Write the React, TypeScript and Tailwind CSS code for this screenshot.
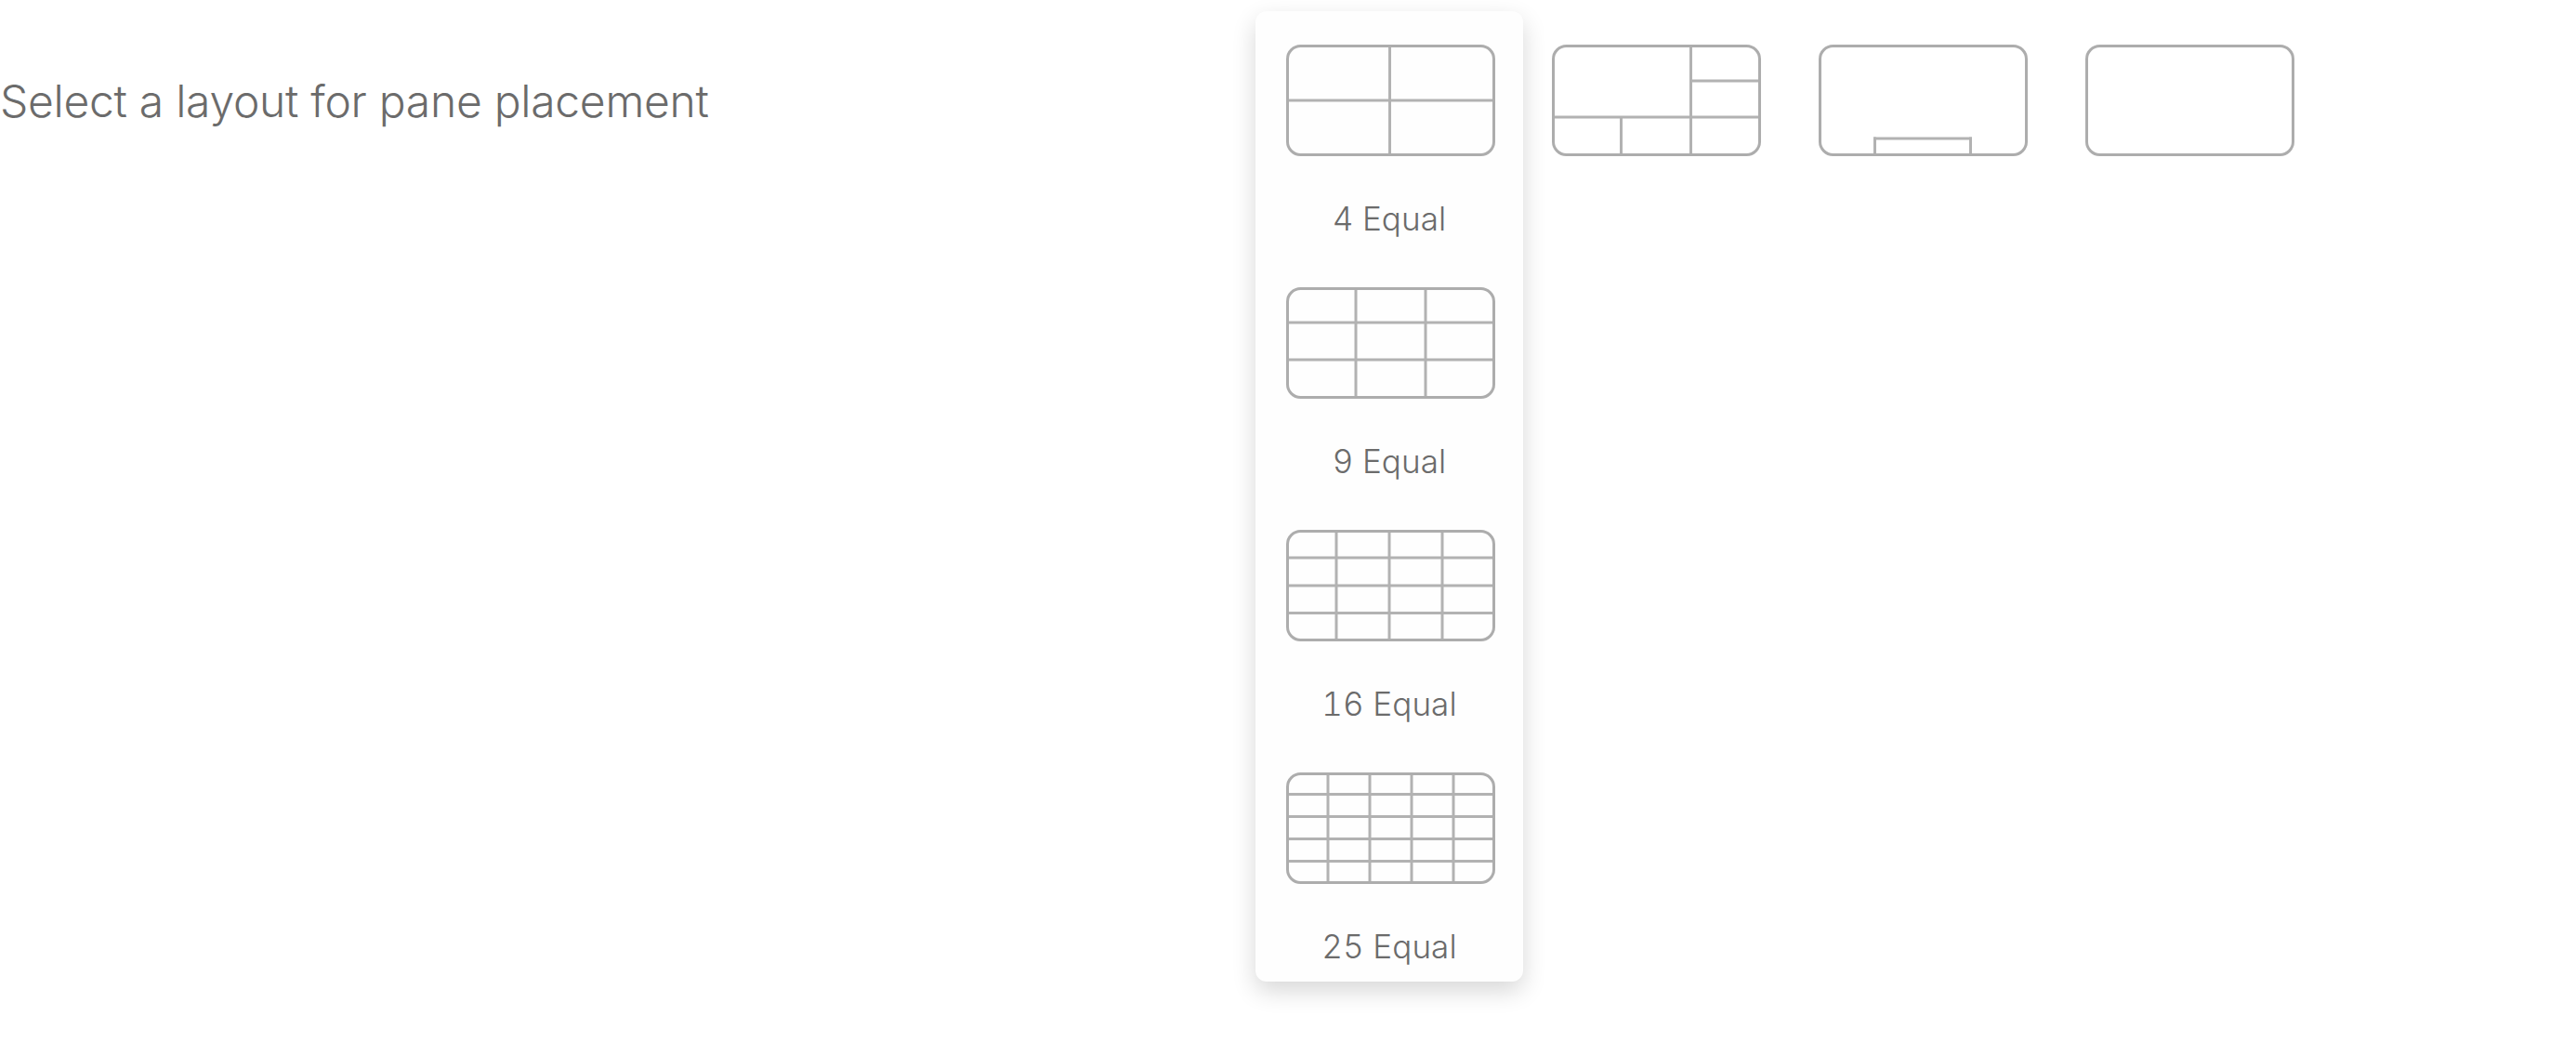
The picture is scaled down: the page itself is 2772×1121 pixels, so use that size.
type Line = [number, number, number, number];

// grid lines for the equal layouts, offsets are measured inside the 225x120 thumbnail
function grid(xs: number[], ys: number[]): Line[] {
  return [
    ...xs.map((x): Line => [x, 2, x, 118]),
    ...ys.map((y): Line => [2, y, 223, y]),
  ];
}

function LayoutIcon({ lines }: { lines: Line[] }) {
  return (
    <svg width="225" height="120" viewBox="0 0 225 120" fill="none" className="block shrink-0">
      {lines.map(([x1, y1, x2, y2], i) => (
        <line key={i} x1={x1} y1={y1} x2={x2} y2={y2} stroke="#b2b2b2" strokeWidth="3" />
      ))}
      <rect x="1.5" y="1.5" width="222" height="117" rx="14" stroke="#adadad" strokeWidth="3" />
    </svg>
  );
}

const equalLayouts: { label: string; lines: Line[] }[] = [
  { label: "4 Equal", lines: grid([111.5], [60]) },
  { label: "9 Equal", lines: grid([75, 150], [38, 78]) },
  { label: "16 Equal", lines: grid([54, 111, 168], [30, 60, 89.5]) },
  { label: "25 Equal", lines: grid([45, 90, 135, 180], [23.5, 47.5, 71.5, 95.5]) },
];

const focusLines: Line[] = [
  [149.5, 2, 149.5, 118],
  [2, 78, 223, 78],
  [149.5, 39, 223, 39],
  [74.5, 78, 74.5, 118],
];

const stageLines: Line[] = [
  [60.5, 118, 60.5, 99.5],
  [59, 101, 165, 101],
  [163.5, 99.5, 163.5, 118],
];

export default function App() {
  return (
    <div className="flex h-[1121px] items-start overflow-hidden bg-white font-['Inter',sans-serif] text-[#6b6b6b]">
      <h1 className="w-[1351px] shrink-0 pt-[79px] text-[48px] leading-[60px] font-light tracking-[-0.28px]">
        Select a layout for pane placement
      </h1>

      <div className="mt-[12px] flex w-[288px] shrink-0 flex-col gap-[50px] rounded-[12px] bg-[#fefefe] pt-[36px] pr-[30px] pb-[14px] pl-[33px] shadow-[0_10px_26px_rgba(0,0,0,0.16)]">
        {equalLayouts.map((layout) => (
          <div key={layout.label} className="flex flex-col items-center">
            <LayoutIcon lines={layout.lines} />
            <span className="mt-[43px] mr-[3px] text-[35px] leading-[48px] font-light tabular-nums tracking-[0.1px]">
              {layout.label}
            </span>
          </div>
        ))}
      </div>

      <div className="flex gap-[62px] pt-[48px] pl-[31px]">
        <LayoutIcon lines={focusLines} />
        <LayoutIcon lines={stageLines} />
        <LayoutIcon lines={[]} />
      </div>
    </div>
  );
}
